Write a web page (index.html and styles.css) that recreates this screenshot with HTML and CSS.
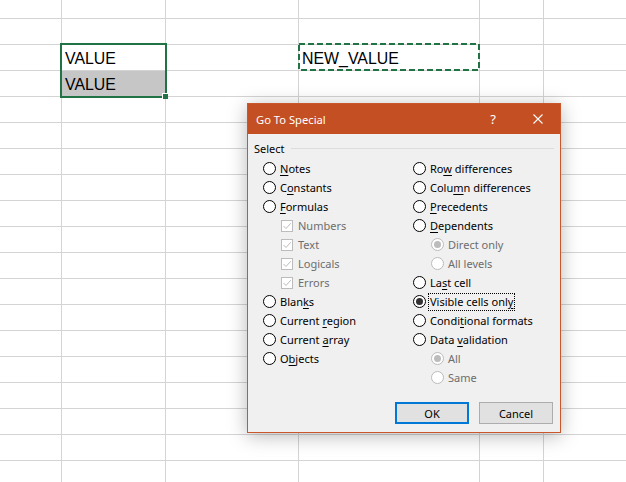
FILE: index.html
```html
<!DOCTYPE html>
<html>
<head>
<meta charset="utf-8">
<title>Go To Special</title>
<link rel="stylesheet" href="styles.css">
</head>
<body>
<div class="sheet">
  <div class="col col-1"></div>
  <div class="col col-2"></div>
  <div class="col col-3"></div>
  <div class="col col-4"></div>
  <div class="col col-5"></div>
  <div class="col col-6"></div>
  <div class="cell cell-value">VALUE</div>
  <div class="cell cell-value-2">VALUE</div>
  <div class="cell cell-new">NEW_VALUE</div>
</div>

<div class="selection"><span class="fill-handle"></span></div>
<svg class="marquee" width="182" height="28" viewBox="0 0 182 28">
  <rect x="1" y="1" width="180" height="26" fill="none" stroke="#217346" stroke-width="2" stroke-dasharray="6 3"/>
</svg>

<div class="dialog">
  <div class="titlebar">
    <span class="title">Go To Special</span>
    <span class="help">?</span>
    <svg class="close" width="10" height="10" viewBox="0 0 10 10">
      <path d="M0.5 0.5L9.5 9.5M9.5 0.5L0.5 9.5" stroke="#fff" stroke-width="1.1" fill="none"/>
    </svg>
  </div>
  <div class="body">
    <div class="group-head"><span>Select</span><span class="rule"></span></div>
    <div class="options">
      <div class="column">
        <div class="opt"><span class="radio"></span><span><u>N</u>otes</span></div>
        <div class="opt"><span class="radio"></span><span>C<u>o</u>nstants</span></div>
        <div class="opt"><span class="radio"></span><span><u>F</u>ormulas</span></div>
        <div class="opt sub disabled"><span class="check"><svg width="10" height="10" viewBox="0 0 10 10"><polyline points="1.5,5 4,7.5 8.8,2.2" fill="none" stroke="#bcbcbc" stroke-width="1"/></svg></span><span>Numbers</span></div>
        <div class="opt sub disabled"><span class="check"><svg width="10" height="10" viewBox="0 0 10 10"><polyline points="1.5,5 4,7.5 8.8,2.2" fill="none" stroke="#bcbcbc" stroke-width="1"/></svg></span><span>Text</span></div>
        <div class="opt sub disabled"><span class="check"><svg width="10" height="10" viewBox="0 0 10 10"><polyline points="1.5,5 4,7.5 8.8,2.2" fill="none" stroke="#bcbcbc" stroke-width="1"/></svg></span><span>Logicals</span></div>
        <div class="opt sub disabled"><span class="check"><svg width="10" height="10" viewBox="0 0 10 10"><polyline points="1.5,5 4,7.5 8.8,2.2" fill="none" stroke="#bcbcbc" stroke-width="1"/></svg></span><span>Errors</span></div>
        <div class="opt"><span class="radio"></span><span>Blan<u>k</u>s</span></div>
        <div class="opt"><span class="radio"></span><span>Current <u>r</u>egion</span></div>
        <div class="opt"><span class="radio"></span><span>Current <u>a</u>rray</span></div>
        <div class="opt"><span class="radio"></span><span>O<u>b</u>jects</span></div>
      </div>
      <div class="column">
        <div class="opt"><span class="radio"></span><span>Ro<u>w</u> differences</span></div>
        <div class="opt"><span class="radio"></span><span>Colu<u>m</u>n differences</span></div>
        <div class="opt"><span class="radio"></span><span><u>P</u>recedents</span></div>
        <div class="opt"><span class="radio"></span><span><u>D</u>ependents</span></div>
        <div class="opt sub disabled"><span class="radio checked"></span><span>Direct only</span></div>
        <div class="opt sub disabled"><span class="radio"></span><span>All levels</span></div>
        <div class="opt"><span class="radio"></span><span>La<u>s</u>t cell</span></div>
        <div class="opt"><span class="radio checked"></span><span class="focus">Visible cells onl<u>y</u></span></div>
        <div class="opt"><span class="radio"></span><span>Condi<u>t</u>ional formats</span></div>
        <div class="opt"><span class="radio"></span><span>Data <u>v</u>alidation</span></div>
        <div class="opt sub disabled"><span class="radio checked"></span><span>All</span></div>
        <div class="opt sub disabled"><span class="radio"></span><span>Same</span></div>
      </div>
    </div>
    <div class="buttons">
      <button class="btn btn-default">OK</button>
      <button class="btn">Cancel</button>
    </div>
  </div>
</div>
</body>
</html>
```

FILE: styles.css
```css
html, body {
  margin: 0;
  padding: 0;
}

body {
  width: 626px;
  height: 482px;
  overflow: hidden;
  position: relative;
  background: #ffffff;
  font-family: "Liberation Sans", Arial, sans-serif;
}

/* ---------- spreadsheet ---------- */
.sheet {
  display: grid;
  grid-template-columns: 62px 104px 133px 181px 64px 1fr;
  grid-template-rows: 19px repeat(18, 26px);
  height: 482px;
  background-image: repeating-linear-gradient(
    to bottom,
    transparent 0px,
    transparent 18px,
    #d4d4d4 18px,
    #d4d4d4 19px,
    transparent 19px,
    transparent 26px
  );
}

.col {
  grid-row: 1 / -1;
  border-right: 1px solid #d4d4d4;
}
.col-1 { grid-column: 1; }
.col-2 { grid-column: 2; }
.col-3 { grid-column: 3; }
.col-4 { grid-column: 4; }
.col-5 { grid-column: 5; }
.col-6 { grid-column: 6; border-right: none; }

.cell {
  font-size: 15.9px;
  line-height: 25px;
  padding: 1px 0 0 3px;
  color: #000;
  white-space: nowrap;
}
.cell-value { grid-column: 2; grid-row: 3; }
.cell-value-2 { grid-column: 2; grid-row: 4; background: #c6c6c6; }
.cell-new { grid-column: 4; grid-row: 3; }

.selection {
  position: absolute;
  left: 60px;
  top: 43px;
  width: 107px;
  height: 55px;
  box-sizing: border-box;
  border: 2px solid #217346;
}
.fill-handle {
  position: absolute;
  right: -3px;
  bottom: -3px;
  width: 5px;
  height: 5px;
  background: #217346;
  border: 1px solid #fff;
  border-bottom: none;
  border-right: none;
}

.marquee {
  position: absolute;
  left: 298px;
  top: 43px;
}

/* ---------- dialog ---------- */
.dialog {
  position: absolute;
  left: 247px;
  top: 103px;
  width: 314px;
  height: 330px;
  box-sizing: border-box;
  border: 1px solid #c8572b;
  background: #f0f0f0;
  box-shadow: 0 3px 18px rgba(0, 0, 0, 0.28);
  display: flex;
  flex-direction: column;
  font-family: "Noto Sans", "Open Sans", sans-serif;
  font-size: 11px;
  color: #000;
}

.titlebar {
  height: 30px;
  background: #c44f22;
  color: #fff;
  display: flex;
  align-items: center;
  padding: 0 17px 0 8px;
}
.title {
  flex: 1;
  font-size: 11.2px;
}
.help {
  width: 20px;
  text-align: center;
  font-size: 13px;
  margin-right: 30px;
}
.close {
  display: block;
}

.body {
  flex: 1;
  display: flex;
  flex-direction: column;
  padding: 6px 0 8px 0;
}

.group-head {
  display: flex;
  align-items: center;
  height: 16px;
  padding: 0 6px;
  gap: 6px;
}
.rule {
  flex: 1;
  height: 1px;
  background: #dcdcdc;
}

.options {
  display: grid;
  grid-template-columns: 150px 1fr;
  margin-top: 3px;
  padding-left: 15px;
}
.column {
  display: flex;
  flex-direction: column;
}
.opt {
  height: 19px;
  display: flex;
  align-items: center;
  white-space: nowrap;
}
.opt.sub {
  padding-left: 18px;
}
.opt.disabled {
  color: #6d6d6d;
}

u {
  text-decoration: underline;
  text-underline-offset: 2px;
}

.radio {
  width: 13px;
  height: 13px;
  box-sizing: border-box;
  border: 1px solid #000;
  border-radius: 50%;
  background: #fff;
  margin-right: 4px;
  display: flex;
  align-items: center;
  justify-content: center;
  flex: none;
}
.radio.checked::after {
  content: "";
  width: 7px;
  height: 7px;
  border-radius: 50%;
  background: #333;
}
.disabled .radio {
  border-color: #bcbcbc;
}
.disabled .radio.checked::after {
  background: #bcbcbc;
}

.check {
  width: 12px;
  height: 12px;
  box-sizing: border-box;
  border: 1px solid #bcbcbc;
  background: #fff;
  margin-right: 5px;
  display: flex;
  align-items: center;
  justify-content: center;
  flex: none;
}
.check svg {
  display: block;
}

.focus {
  border: 1px dotted #000;
  padding: 0 1px;
  margin-left: -2px;
  line-height: 16px;
}

.buttons {
  margin-top: auto;
  display: flex;
  justify-content: flex-end;
  gap: 10px;
  padding-right: 7px;
}
.btn {
  width: 74px;
  height: 22px;
  box-sizing: border-box;
  border: 1px solid #adadad;
  background: #e1e1e1;
  font-family: "Noto Sans", "Open Sans", sans-serif;
  font-size: 11px;
  color: #000;
  padding: 0;
}
.btn-default {
  border: 2px solid #0078d7;
}
```
